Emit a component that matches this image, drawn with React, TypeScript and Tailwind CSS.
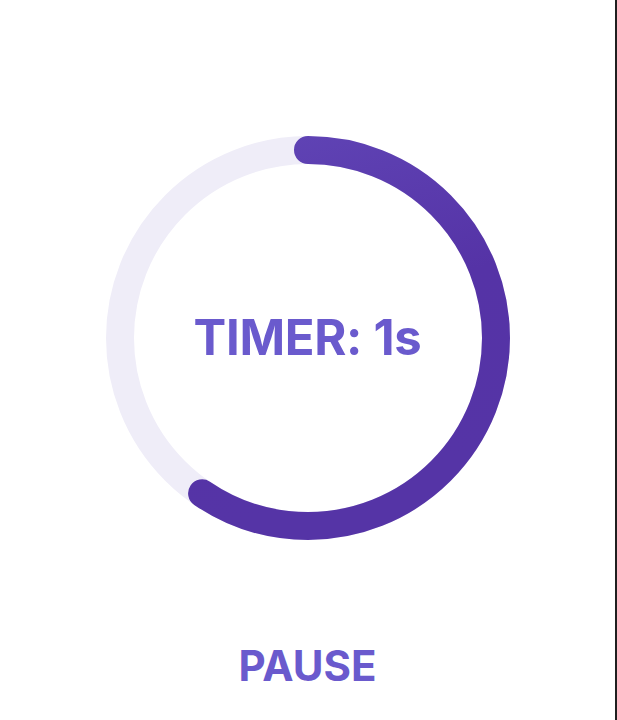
import React from "react";

const SIZE = 404;
const STROKE = 28;
const RADIUS = (SIZE - STROKE) / 2;
const CIRC = 2 * Math.PI * RADIUS;

const ProgressRing: React.FC<{ progress: number }> = ({ progress }) => {
  const offset = CIRC * (1 - progress);
  return (
    <svg width={SIZE} height={SIZE} viewBox={`0 0 ${SIZE} ${SIZE}`}>
      <defs>
        {/* gradient lives in the rotated space: local +x points up on screen */}
        <linearGradient id="ring" x1="1" y1="0" x2="0" y2="0.3">
          <stop offset="0%" stopColor="#6146b7" />
          <stop offset="55%" stopColor="#5533a6" />
          <stop offset="100%" stopColor="#5534a6" />
        </linearGradient>
      </defs>
      <circle
        cx={SIZE / 2}
        cy={SIZE / 2}
        r={RADIUS}
        fill="none"
        stroke="#efedf8"
        strokeWidth={STROKE}
      />
      <circle
        cx={SIZE / 2}
        cy={SIZE / 2}
        r={RADIUS}
        fill="none"
        stroke="url(#ring)"
        strokeWidth={STROKE}
        strokeLinecap="round"
        strokeDasharray={CIRC}
        strokeDashoffset={offset}
        transform={`rotate(-90 ${SIZE / 2} ${SIZE / 2})`}
      />
    </svg>
  );
};

const App: React.FC = () => {
  return (
    <div
      className="min-h-[720px] w-[617px] bg-white border-r-2 border-[#1f1f1f] flex flex-col items-center"
      style={{ fontFamily: "Inter, 'Noto Sans', sans-serif" }}
    >
      {/* Timer ring */}
      <div className="relative mt-[136px] w-[404px] h-[404px]">
        <ProgressRing progress={0.595} />
        <div className="absolute inset-0 flex items-center justify-center">
          <span className="text-[49px] font-bold text-[#6a5acd] tracking-[-0.3px]">
            TIMER: 1s
          </span>
        </div>
      </div>

      {/* Control */}
      <button className="mt-[105px] text-[42px] leading-none font-bold text-[#6a5acd]">
        PAUSE
      </button>
    </div>
  );
};

export default App;
